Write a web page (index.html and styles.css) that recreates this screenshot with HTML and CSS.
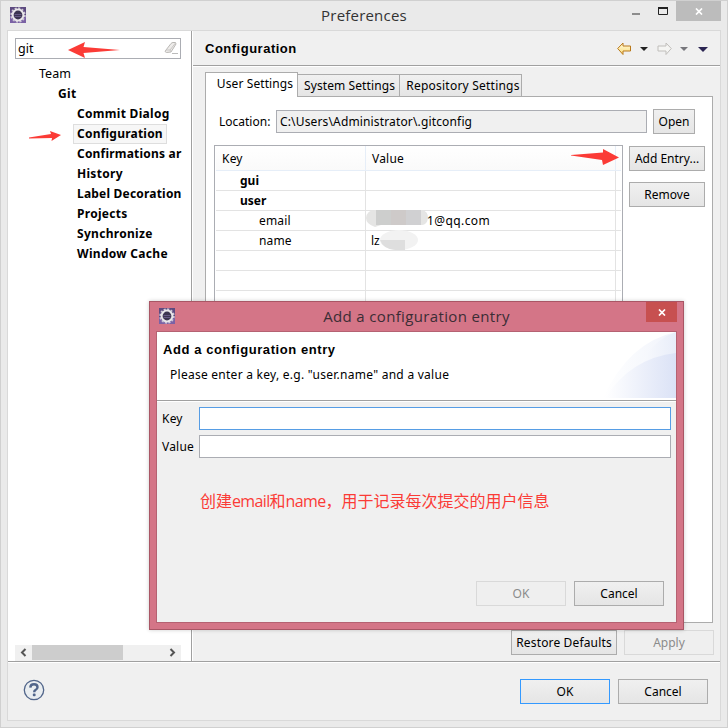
FILE: index.html
```html
<!DOCTYPE html>
<html lang="en">
<head>
<meta charset="utf-8">
<title>Preferences</title>
<link rel="stylesheet" href="styles.css">
</head>
<body>
<svg width="0" height="0" class="defs">
  <defs>
    <linearGradient id="gold" x1="0" y1="0" x2="0" y2="1"><stop offset="0" stop-color="#fffbe0"/><stop offset="1" stop-color="#fbdc78"/></linearGradient>
    <linearGradient id="sweep" x1="0" y1="0" x2="1" y2="0"><stop offset="0" stop-color="#fff"/><stop offset="1" stop-color="#dbe2f6"/></linearGradient>
    <linearGradient id="sweepLight" x1="0" y1="0" x2="1" y2="0"><stop offset="0" stop-color="#fff"/><stop offset="1" stop-color="#e8edf9"/></linearGradient>
    <symbol id="gear" viewBox="0 0 16 16">
      <rect width="16" height="16" fill="#5d4a80"/>
      <rect y="9" width="16" height="7" fill="#7b62a5"/>
      <circle cx="8" cy="8" r="6.900" fill="none" stroke="#cfcad6" stroke-width="1.600" stroke-dasharray="2.100 1.512"/>
      <circle cx="8" cy="8" r="5.400" fill="#3c3450" stroke="#e9e6e9" stroke-width="2"/>
      <path d="M4.500 7.500h7M4.500 9.500h7" stroke="#665985" stroke-width="1"/>
    </symbol>
    <symbol id="close" viewBox="0 0 8 7"><path d="M1 .5L7 6.500M7 .5L1 6.500" stroke="#fff" stroke-width="1.700"/></symbol>
  </defs>
</svg>
<div class="window">
  <header class="titlebar">
    <svg class="app-icon"><use href="#gear"/></svg>
    <h1 class="window-title">Preferences</h1>
    <svg class="minmax" width="46" height="20"><path d="M1 13h8" stroke="#8d8d8d" stroke-width="2"/><path d="M27.500 7.500h9v6h-9z" fill="none" stroke="#222" stroke-width="1"/><path d="M27 7h10" stroke="#222" stroke-width="2"/></svg>
    <button class="close"><svg width="8" height="7"><use href="#close"/></svg></button>
  </header>
  <div class="client">
    <div class="main">
      <aside class="sidebar">
        <div class="filter"><span>git</span>
          <svg class="filter-arrow" width="54" height="18"><path d="M0 9L17 1L15.500 6L52 9L15.500 12L17 17Z" fill="#fb3b36"/></svg>
          <svg class="eraser" width="15" height="13"><path d="M2 8L7 1.500Q8 .5 9 .5H11.500L12 2L7 10L2.500 10.500L1 9.500Z" fill="#eeecea" stroke="#bab8b5"/><path d="M2 8H6L11.500 1M6 8L7 10" fill="none" stroke="#c9c7c5"/><path d="M8 11.500h6" stroke="#bbb"/></svg>
        </div>
        <ul class="tree">
          <li class="l1">Team</li>
          <li class="l2">Git</li>
          <li class="l3">Commit Dialog</li>
          <li class="l3 selected"><span>Configuration</span><svg class="tree-arrow" width="33" height="12"><path d="M0 7.500L22 4L21 1L32 5L22.500 11L23 8L0 8.500Z" fill="#fb3b36"/></svg></li>
          <li class="l3 fit">Confirmations ar</li>
          <li class="l3">History</li>
          <li class="l3 fit">Label Decoration</li>
          <li class="l3">Projects</li>
          <li class="l3">Synchronize</li>
          <li class="l3">Window Cache</li>
        </ul>
        <div class="scrollbar">
          <svg width="17" height="16"><path d="M10.500 4L7 7.500L10.500 11" fill="none" stroke="#555" stroke-width="2"/></svg>
          <div class="thumb"></div>
          <svg width="17" height="16"><path d="M6.500 4L10 7.500L6.500 11" fill="none" stroke="#555" stroke-width="2"/></svg>
        </div>
      </aside>
      <section class="page">
        <div class="page-head">
          <h2>Configuration</h2>
          <svg class="nav" width="92" height="14">
            <path d="M.7 6.500L6 1V4H13.500V9H6V12.500Z" fill="url(#gold)" stroke="#b9781a"/>
            <path d="M23 5h8l-4 4z" fill="#222"/>
            <path d="M54.300 6.500L49 1V4H41V9H49V12.500Z" fill="#f5f5f3" stroke="#c0bebb"/>
            <path d="M63 5h8l-4 4z" fill="#77777c"/>
            <path d="M81 5h10l-5 5z" fill="#2b2552"/>
          </svg>
        </div>
        <nav class="tabs">
          <div class="tab active">User Settings</div><div class="tab system">System Settings</div><div class="tab repo">Repository Settings</div>
        </nav>
        <div class="panel">
          <div class="location">
            <label>Location:</label><div class="path">C:\Users\Administrator\.gitconfig</div><button class="btn open">Open</button>
          </div>
          <div class="entries">
            <div class="table">
              <div class="row head"><span>Key</span><span>Value</span><span></span></div>
              <div class="row group"><span>gui</span><span></span><span></span></div>
              <div class="row group"><span>user</span><span></span><span></span></div>
              <div class="row leaf"><span>email</span><span class="email"><svg class="mask" width="64" height="18"><path d="M9 0H56Q62 1 62 8Q61 15 56 15H15L9 17Q0 14 0 8Q1 0 9 0Z" fill="#e5e5e4"/><path d="M10 0h15v15h-15z" fill="#cdcecd"/><path d="M25 0h15v15h-15z" fill="#cecac9"/><path d="M40 0h15v15h-15z" fill="#d0d0d2"/></svg><b>1@qq.com</b></span><span></span></div>
              <div class="row leaf"><span>name</span><span class="name">lz<svg class="mask" width="38" height="20"><ellipse cx="19" cy="10" rx="19" ry="10" fill="#f2f2f2"/><path d="M0 10H25V20H15Q3 19 0 10Z" fill="#dedede"/></svg></span><span></span></div>
              <div class="row"><span></span><span></span><span></span></div>
              <div class="row"><span></span><span></span><span></span></div>
              <div class="row"><span></span><span></span><span></span></div>
              <svg class="entry-arrow" width="50" height="18"><path d="M0 7L32 4.500V1L48 9.500L32 17L31 12L0 7.500Z" fill="#fb3b36"/></svg>
            </div>
            <div class="side-buttons"><button class="btn">Add Entry...</button><button class="btn">Remove</button></div>
          </div>
        </div>
        <div class="page-actions"><button class="btn restore">Restore Defaults</button><button class="btn wide disabled">Apply</button></div>
      </section>
    </div>
    <footer class="footer">
      <svg class="help" width="22" height="22"><circle cx="11" cy="11" r="9.700" fill="#e9edf0" stroke="#51658a" stroke-width="1.300"/><path d="M7.300 8.600Q7.500 5.300 11 5.300Q14.500 5.300 14.500 8.300Q14.500 10 12.500 11Q11.200 11.700 11.200 13.300" fill="none" stroke="#51658a" stroke-width="2.400"/><rect x="9.800" y="14.600" width="2.800" height="2.600" rx="1" fill="#51658a"/></svg>
      <button class="btn wide default">OK</button><button class="btn wide">Cancel</button>
    </footer>
  </div>
</div>
<div class="dialog">
  <header class="dialog-title">
    <svg class="app-icon"><use href="#gear"/></svg>
    <h1>Add a configuration entry</h1>
    <button class="close red"><svg width="8" height="7"><use href="#close"/></svg></button>
  </header>
  <div class="dialog-body">
    <div class="banner">
      <h2>Add a configuration entry</h2>
      <p>Please enter a key, e.g. "user.name" and a value</p>
      <svg class="sweep" width="73" height="66"><path d="M0 66Q26 10 73 0V66Z" fill="url(#sweepLight)" opacity=".65"/><path d="M25 66Q38 12 73 0V66Z" fill="url(#sweepLight)"/><path d="M2 66Q28 26 73 21V66Z" fill="url(#sweep)"/></svg>
    </div>
    <div class="form">
      <label>Key</label><div class="input focus"></div>
      <label>Value</label><div class="input"></div>
    </div>
    <p class="note">创建<span>email</span>和<span>name</span>，用于记录每次提交的用户信息</p>
    <div class="dialog-actions"><button class="btn wide disabled">OK</button><button class="btn wide">Cancel</button></div>
  </div>
</div>
</body>
</html>
```

FILE: styles.css
```css
* { box-sizing: border-box; }
body { margin: 0; width: 728px; height: 728px; overflow: hidden; position: relative; font: 12px/20px "Noto Sans", "Open Sans", sans-serif; color: #000; }
h1, h2, p, ul { margin: 0; padding: 0; font-weight: normal; }
svg { display: block; flex: none; }
.defs { position: absolute; }
button { font: inherit; color: inherit; padding: 0; margin: 0; border-radius: 0; }

.window { width: 728px; height: 728px; background: #eaeaea; border: 1px solid #d0d0d0; padding: 0 6px 6px; display: flex; flex-direction: column; }
.titlebar { height: 29px; flex: none; position: relative; display: flex; justify-content: flex-end; align-items: flex-start; }
.app-icon { width: 16px; height: 16px; }
.titlebar .app-icon { position: absolute; left: 3px; top: 6px; }
.window-title { position: absolute; left: 0; right: 0; top: 4px; text-align: center; font: 15px/20px "Open Sans", sans-serif; color: #333; letter-spacing: .2px; }
.minmax { margin-right: -1px; }
.close { width: 45px; height: 20px; border: 0; background: #bcbcbc; display: flex; align-items: center; justify-content: center; }

.client { flex: 1; border: 1px solid #d9d9d9; background: #f0f0f0; display: flex; flex-direction: column; min-height: 0; }
.main { flex: 1; display: flex; min-height: 0; border-bottom: 1px solid #a0a0a0; }
.sidebar { width: 184px; flex: none; background: #fff; border-right: 1px solid #a0a0a0; padding: 7px 10px 0 7px; display: flex; flex-direction: column; }
.filter { height: 21px; border: 1px solid #abadb3; display: flex; align-items: center; padding: 0 1px 0 2px; position: relative; font-size: 12.500px; }
.filter span { flex: 1; }
.filter-arrow { position: absolute; left: 52px; top: 2px; }
.tree { list-style: none; margin-top: 5px; flex: 1; width: 166px; white-space: nowrap; }
.tree li { height: 20px; }
.l1 { padding-left: 24px; font-size: 12.500px; }
.l2, .l3 { font-weight: bold; letter-spacing: .3px; }
.l2 { padding-left: 43px; }
.l3 { padding-left: 62px; }
.l3:first-of-type { letter-spacing: .4px; }
.fit { letter-spacing: .2px; }
.selected { position: relative; letter-spacing: .22px; }
.selected span { display: block; width: 94px; height: 20px; line-height: 18px; margin-left: -4px; padding-left: 3px; border: 1px solid #dedede; background: #f7f7f7; }
.tree-arrow { position: absolute; left: 14px; top: 6px; }
.scrollbar { height: 16px; background: #f0f0f0; display: flex; }
.thumb { width: 91px; margin-right: 41px; height: 15px; background: #cdcdcd; }

.page { flex: 1; border-left: 1px solid #fff; display: flex; flex-direction: column; min-width: 0; }
.page-head { height: 35px; flex: none; border-bottom: 1px solid #a0a0a0; box-shadow: 0 1px #fff; display: flex; align-items: center; justify-content: space-between; padding: 2px 11px 0 12px; }
.page-head h2, .banner h2 { font: bold 13px/18px "Liberation Sans", sans-serif; letter-spacing: .5px; }
.nav { margin-bottom: 1px; }
.tabs { height: 24px; flex: none; margin: 6px 0 0 12px; display: flex; align-items: flex-end; }
.tab { height: 22px; border: 1px solid #acacac; border-left: 0; border-bottom: 0; background: linear-gradient(#f0f0f0, #e5e5e5); text-align: center; line-height: 21px; white-space: nowrap; letter-spacing: .1px; }
.tab.active { width: 93px; height: 25px; border-left: 1px solid #acacac; background: #fff; line-height: 22px; margin-bottom: -1px; position: relative; padding-left: 7px; }
.tab.system { width: 102px; padding-left: 2px; }
.tab.repo { width: 122px; letter-spacing: .22px; padding-left: 5px; }
.panel { flex: 1; min-height: 0; margin: 0 7px 0 12px; border: 1px solid #acacac; background: #fff; padding: 12px 7px 0 8px; display: flex; flex-direction: column; overflow: hidden; }
.location { display: flex; align-items: center; height: 25px; flex: none; }
.location label { width: 62px; padding-left: 5px; }
.path { width: 371px; height: 23px; border: 1px solid #abadb3; background: #f0f0f0; padding-left: 3px; line-height: 22px; margin-right: 6px; letter-spacing: .15px; }
.btn { height: 25px; border: 1px solid #acacac; background: linear-gradient(#f0f0f0, #e5e5e5); text-align: center; line-height: 22px; white-space: nowrap; }
.btn.open { width: 42px; }
.btn.wide { width: 90px; }
.btn.restore { width: 106px; letter-spacing: .15px; }
.btn.disabled { color: #8b8b8b; border-color: #d9d9d9; background: #efefef; }
.btn.default { border-color: #3399ff; }
.entries { margin-top: 11px; flex: 1; display: flex; justify-content: space-between; min-height: 0; }
.table { width: 409px; border: 1px solid #abadb3; padding: 0 1px; position: relative; }
.row { height: 20px; display: grid; grid-template-columns: 150px 250px 1fr; border-bottom: 1px solid #e3e3e3; line-height: 20px; }
.row > span { border-right: 1px solid #e3e3e3; padding-left: 6px; height: 20px; }
.row > span:last-child { border: 0; }
.row.head { height: 25px; background: linear-gradient(#fff, #fafafa); border-color: #e6eef8; line-height: 25px; letter-spacing: .2px; }
.row.head > span { height: 24px; border-color: #e6eef8; }
.group { font-weight: bold; }
.group > span:first-child { padding-left: 24px; }
.leaf > span:first-child { padding-left: 43px; letter-spacing: .15px; }
.leaf .email { position: relative; padding-left: 61px; letter-spacing: .4px; }
.email b { position: relative; font-weight: normal; }
.leaf .name { position: relative; padding-left: 5px; }
.email .mask { position: absolute; left: 0; top: -1px; }
.name .mask { position: absolute; left: 14px; top: -1px; }
.entry-arrow { position: absolute; right: 1px; top: 2px; }
.side-buttons { width: 76px; display: flex; flex-direction: column; gap: 11px; padding-top: 1px; letter-spacing: .1px; }
.page-actions { height: 38px; flex: none; display: flex; justify-content: flex-end; gap: 7px; padding: 7px 6px 0 0; }
.footer { height: 58px; flex: none; border-top: 1px solid #fff; display: flex; align-items: center; padding: 0 12px 0 15px; gap: 8px; }
.help { margin: 0 auto 3px 0; }

.dialog { position: absolute; left: 149px; top: 301px; width: 535px; height: 329px; background: #d47587; border: 1px solid #a95665; padding: 0 6px 6px; display: flex; flex-direction: column; box-shadow: 0 0 4px #0003; }
.dialog-title { height: 29px; flex: none; display: flex; justify-content: flex-end; position: relative; }
.dialog-title .app-icon { position: absolute; left: 3px; top: 6px; }
.dialog-title h1 { position: absolute; left: 0; right: 0; top: 4px; text-align: center; font: 15px/20px "Open Sans", sans-serif; color: #3b2d35; letter-spacing: .35px; }
.close.red { width: 31px; background: #c75050; position: relative; }
.dialog-body { flex: 1; border: 1px solid #b56272; background: #f0f0f0; display: flex; flex-direction: column; }
.banner { height: 69px; flex: none; background: #fff; border-bottom: 1px solid #a0a0a0; box-shadow: 0 1px #fff; position: relative; padding: 9px 6px; }
.banner h2 { letter-spacing: .58px; }
.banner p { padding: 6px 0 0 7px; letter-spacing: .26px; }
.sweep { position: absolute; right: 0; top: 0; }
.form { display: grid; grid-template-columns: 37px 472px; gap: 5px 0; padding: 6px 0 0 5px; line-height: 24px; }
.input { height: 23px; background: #fff; border: 1px solid #abadb3; }
.form label { height: 23px; letter-spacing: .2px; }
.input.focus { border-color: #569de5; }
.note { color: #fb3b36; font: 16px/24px "Noto Sans CJK SC", sans-serif; margin: 30px 0 0 43px; white-space: nowrap; }
.note span { font-family: "Open Sans", sans-serif; letter-spacing: -.65px; }
.dialog-actions { margin-top: auto; display: flex; justify-content: flex-end; gap: 8px; padding: 0 12px 16px 0; }
```
